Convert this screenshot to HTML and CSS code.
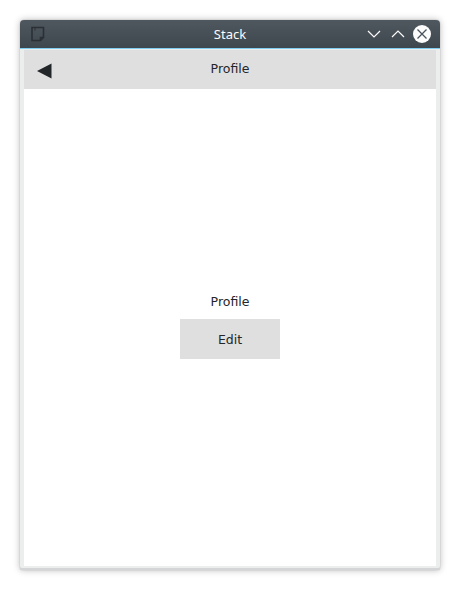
FILE: index.html
```html
<!DOCTYPE html>
<html lang="en">
<head>
  <meta charset="UTF-8">
  <meta name="viewport" content="width=device-width, initial-scale=1.0">
  <title>Stack</title>
  <link rel="stylesheet" href="styles.css">
</head>
<body>
  <div class="window">
    <div class="titlebar">
      <svg class="app-icon" width="16" height="16" viewBox="0 0 16 16" fill="none" stroke="#2a3036" stroke-width="1.6">
        <path d="M2 1.5h11.5v10l-3 3H2z"/>
        <path d="M13.5 11.5h-3v3"/>
        <path d="M5 1.5v3" stroke-width="1"/>
      </svg>
      <span class="title">Stack</span>
      <div class="controls">
        <svg class="minimize" width="14" height="14" viewBox="0 0 14 14" fill="none" stroke="#fcfcfc" stroke-width="1.2"><path d="M1 4l6 6 6-6"/></svg>
        <svg width="14" height="14" viewBox="0 0 14 14" fill="none" stroke="#fcfcfc" stroke-width="1.2"><path d="M1 10l6-6 6 6"/></svg>
        <svg width="18" height="18" viewBox="0 0 18 18"><circle cx="9" cy="9" r="9" fill="#fcfcfc"/><path d="M4.5 4.5l9 9M13.5 4.5l-9 9" stroke="#4a535b" stroke-width="1.3"/></svg>
      </div>
    </div>
    <div class="content">
      <div class="header">
        <svg class="back" width="15" height="16" viewBox="0 0 15 16"><path d="M0 8L14.5 0.5v15z" fill="#232629"/></svg>
        <span class="label">Profile</span>
      </div>
      <div class="page">
        <span class="label">Profile</span>
        <div class="button">Edit</div>
      </div>
    </div>
  </div>
</body>
</html>
```

FILE: styles.css
```css
html, body {
  margin: 0;
  background: #fff;
}

body {
  padding: 20px 20px 19px;
  font-family: "DejaVu Sans", sans-serif;
  font-size: 12.5px;
  color: #232629;
}

.window {
  height: 550px;
  display: flex;
  flex-direction: column;
  background: #eceded;
  border-radius: 4px 4px 2px 2px;
  box-shadow: inset 0 -2px 0 #d4d5d6, 0 0 1px rgba(0, 0, 0, 0.4), 0 0 7px rgba(0, 0, 0, 0.28);
}

.titlebar {
  height: 28px;
  flex-shrink: 0;
  display: flex;
  align-items: center;
  justify-content: center;
  position: relative;
  background: linear-gradient(#50585f, #3f474e);
  border-bottom: 1px solid #7fcdf0;
  border-radius: 4px 4px 0 0;
  font-family: "Noto Sans", sans-serif;
  font-size: 13px;
  color: #fcfcfc;
}

.app-icon {
  position: absolute;
  left: 10px;
  top: 6px;
}

.controls {
  position: absolute;
  right: 9px;
  top: 5px;
  display: flex;
  align-items: center;
  gap: 8px;
}

.minimize {
  margin-right: 2px;
}

.content {
  flex-grow: 1;
  display: flex;
  flex-direction: column;
  margin: 1px 4px 4px;
  background: #fff;
}

.header {
  height: 39px;
  flex-shrink: 0;
  padding-bottom: 2px;
  box-sizing: border-box;
  display: flex;
  align-items: center;
  justify-content: center;
  position: relative;
  background: #dfdfdf;
}

.back {
  position: absolute;
  left: 13px;
  top: 13px;
}

.page {
  flex-grow: 1;
  display: flex;
  flex-direction: column;
  align-items: center;
  justify-content: center;
  gap: 7px;
  padding-bottom: 4px;
}

.label {
  line-height: 20px;
}

.button {
  width: 100px;
  height: 40px;
  display: flex;
  align-items: center;
  justify-content: center;
  background: #dfdfdf;
}
```
